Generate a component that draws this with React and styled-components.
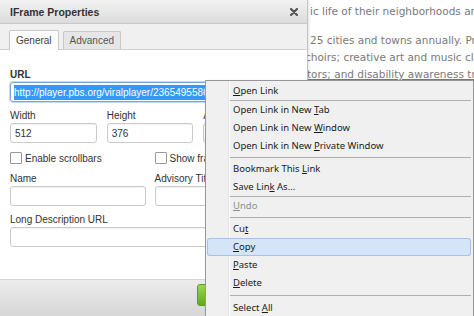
import styled, { createGlobalStyle } from "styled-components";

const GlobalStyle = createGlobalStyle`
  html, body {
    margin: 0;
    padding: 0;
    background: #fff;
    overflow: hidden;
  }
`;

const Screen = styled.div`
  position: relative;
  width: 474px;
  height: 316px;
  overflow: hidden;
  background: #fff;
`;

/* page behind the dialog */
const Article = styled.div`
  padding: 3px 0 0 310px;
  font-family: "DejaVu Sans", sans-serif;
  font-size: 10.5px;
  line-height: 17px;
  color: #7a7a7a;
  white-space: nowrap;
`;

const Para = styled.div`
  margin-bottom: 12px;
`;

const Line = styled.div`
  margin-left: ${(p) => p.$shift || 0}px;
  text-decoration: ${(p) => (p.$link ? "underline" : "none")};
`;

/* dialog */
const Dialog = styled.div`
  position: absolute;
  left: 0;
  top: 0;
  width: 307px;
  height: 316px;
  display: flex;
  flex-direction: column;
  background: #fff;
  border-right: 1px solid #c4c4c4;
  box-shadow: 1px 0 3px rgba(0, 0, 0, 0.12);
  font-family: "Liberation Sans", Arial, sans-serif;
  font-size: 10px;
  color: #333;
`;

const TitleBar = styled.div`
  height: 23px;
  flex: none;
  display: flex;
  align-items: center;
  justify-content: space-between;
  padding: 0 9px 0 10px;
  border-bottom: 1px solid #c8c8c8;
  background: linear-gradient(#f2f2f2, #dcdcdc);
`;

const Title = styled.div`
  font-size: 10.5px;
  font-weight: bold;
  color: #333;
`;

const TabStrip = styled.div`
  height: 25px;
  flex: none;
  display: flex;
  align-items: flex-end;
  gap: 4px;
  padding-left: 9px;
  border-bottom: 1px solid #cfcfcf;
  background: #f0f0f0;
`;

const Tab = styled.div`
  box-sizing: border-box;
  height: ${(p) => (p.$active ? 20 : 18)}px;
  margin-bottom: ${(p) => (p.$active ? -1 : 0)}px;
  padding: 0 6px;
  display: flex;
  align-items: center;
  border: 1px solid #c8c8c8;
  border-bottom: none;
  border-radius: 2px 2px 0 0;
  background: ${(p) => (p.$active ? "#fcfcfc" : "#e6e6e6")};
  color: ${(p) => (p.$active ? "#444" : "#555")};
`;

const Body = styled.div`
  flex: 1;
  display: flex;
  flex-direction: column;
  gap: 8px;
  padding: 19px 17px 0 10px;
`;

const Row = styled.div`
  display: grid;
  grid-template-columns: repeat(${(p) => p.$cols || 1}, 1fr);
  column-gap: ${(p) => (p.$cols === 3 ? 10 : 9)}px;
`;

const Field = styled.div`
  display: flex;
  flex-direction: column;
  min-width: 0;
`;

const Label = styled.label`
  line-height: 12px;
  margin-bottom: 1px;
  font-weight: ${(p) => (p.$bold ? "bold" : "normal")};
  white-space: nowrap;
`;

const TextInput = styled.input`
  box-sizing: border-box;
  width: 100%;
  height: 20px;
  margin: 0;
  padding: 0 4px;
  border: 1px solid #cacaca;
  border-radius: 3px;
  box-shadow: inset 0 1px 1px rgba(0, 0, 0, 0.06);
  background: #fff;
  font: inherit;
  color: #333;
  outline: none;
`;

const FocusBox = styled.div`
  box-sizing: border-box;
  height: 20px;
  padding: 0 3px;
  display: flex;
  align-items: center;
  border: 1px solid #7aa7da;
  border-radius: 3px;
  box-shadow: 0 0 0 1px rgba(122, 167, 218, 0.45);
  white-space: nowrap;
  overflow: hidden;
`;

const Selected = styled.span`
  background: #3399ff;
  color: #fff;
  line-height: 15px;
`;

const SelectBox = styled.div`
  box-sizing: border-box;
  height: 20px;
  padding: 0 4px;
  display: flex;
  align-items: center;
  border: 1px solid #cacaca;
  border-radius: 3px;
  background: linear-gradient(#fff, #f1f1f1);
`;

const CheckRow = styled.label`
  height: 14px;
  display: flex;
  align-items: center;
  gap: 3px;
  white-space: nowrap;
`;

const Check = styled.input.attrs({ type: "checkbox" })`
  appearance: none;
  box-sizing: border-box;
  width: 12px;
  height: 12px;
  margin: 0;
  border: 1px solid #9a9a9a;
  border-radius: 1px;
  background: #fff;
`;

const Footer = styled.div`
  height: 32px;
  flex: none;
  display: flex;
  justify-content: flex-end;
  align-items: flex-start;
  gap: 6px;
  padding: 4px 10px 0 0;
  border-top: 1px solid #d4d4d4;
  background: linear-gradient(#ececec, #d6d6d6);
`;

const Button = styled.button`
  height: 22px;
  width: ${(p) => p.$w}px;
  border-radius: 3px;
  font: inherit;
  font-weight: bold;
  border: 1px solid ${(p) => (p.$primary ? "#5a9e1e" : "#b6b6b6")};
  background: ${(p) =>
    p.$primary
      ? "linear-gradient(#9bd84c, #62aa20)"
      : "linear-gradient(#fff, #e4e4e4)"};
  color: ${(p) => (p.$primary ? "#fff" : "#333")};
`;

/* context menu */
const Menu = styled.ul`
  position: absolute;
  left: 205px;
  top: 80px;
  width: 267px;
  margin: 0;
  padding: 1px 0 6px;
  list-style: none;
  border: 1px solid #979797;
  background: linear-gradient(
    to right,
    #f0f0f0 22px,
    #e2e3e3 22px,
    #e2e3e3 23px,
    #fff 23px,
    #fff 24px,
    #f0f0f0 24px
  );
  box-shadow: 2px 2px 3px rgba(0, 0, 0, 0.25);
  font-family: "Noto Sans", sans-serif;
  font-size: 9.5px;
  color: #1a1a1a;
`;

const Item = styled.li`
  box-sizing: border-box;
  height: 18px;
  line-height: 18px;
  margin: 0 2px 0 1px;
  padding-left: 26px;
  border-radius: 3px;
  white-space: nowrap;
  color: ${(p) => (p.$disabled ? "#8e8e8e" : "inherit")};
  background: ${(p) => (p.$active ? "#d4e5f8" : "transparent")};
  box-shadow: ${(p) => (p.$active ? "inset 0 0 0 1px #a3c3e9" : "none")};
`;

const Sep = styled.li`
  height: 1px;
  margin: ${(p) => p.$space || 0}px 2px ${(p) => p.$space || 0}px 24px;
  background: #aeaeae;
`;

const CloseIcon = () => (
  <svg width="8" height="8" viewBox="0 0 8 8">
    <path
      d="M1 1 L7 7 M7 1 L1 7"
      stroke="#555"
      strokeWidth="2.2"
      strokeLinecap="round"
    />
  </svg>
);

const MENU = [
  ["item", "", "O", "pen Link"],
  ["sep", 0],
  ["item", "Open Link in New ", "T", "ab"],
  ["item", "Open Link in New ", "W", "indow"],
  ["item", "Open Link in New ", "P", "rivate Window"],
  ["sep", 2],
  ["item", "Bookmark This ", "L", "ink"],
  ["item", "Save Lin", "k", " As…"],
  ["sep", 0],
  ["item", "", "U", "ndo", "disabled"],
  ["sep", 2],
  ["item", "Cu", "t", ""],
  ["item", "", "C", "opy", "active"],
  ["item", "", "P", "aste"],
  ["item", "", "D", "elete"],
  ["sep", 3],
  ["item", "Select ", "A", "ll"],
];

export default function App() {
  return (
    <Screen>
      <GlobalStyle />
      <Article>
        <Para>
          <Line>ic life of their neighborhoods and communities.</Line>
        </Para>
        <Para>
          <Line>25 cities and towns annually. Programs include</Line>
          <Line $shift={-5}>choirs; creative art and music classes;</Line>
          <Line $shift={-3} $link>
            tors; and disability awareness training.
          </Line>
        </Para>
      </Article>

      <Dialog>
        <TitleBar>
          <Title>IFrame Properties</Title>
          <CloseIcon />
        </TitleBar>
        <TabStrip>
          <Tab $active>General</Tab>
          <Tab>Advanced</Tab>
        </TabStrip>
        <Body>
          <Field>
            <Label $bold>URL</Label>
            <FocusBox>
              <Selected>http://player.pbs.org/viralplayer/2365495586</Selected>
            </FocusBox>
          </Field>
          <Row $cols={3}>
            <Field>
              <Label>Width</Label>
              <TextInput defaultValue="512" />
            </Field>
            <Field>
              <Label>Height</Label>
              <TextInput defaultValue="376" />
            </Field>
            <Field>
              <Label>Alignment</Label>
              <SelectBox>&lt;not set&gt;</SelectBox>
            </Field>
          </Row>
          <Row $cols={2}>
            <CheckRow>
              <Check />
              Enable scrollbars
            </CheckRow>
            <CheckRow>
              <Check />
              Show frame border
            </CheckRow>
          </Row>
          <Row $cols={2}>
            <Field>
              <Label>Name</Label>
              <TextInput />
            </Field>
            <Field>
              <Label>Advisory Title</Label>
              <TextInput />
            </Field>
          </Row>
          <Field>
            <Label>Long Description URL</Label>
            <TextInput />
          </Field>
        </Body>
        <Footer>
          <Button $primary $w={50}>
            OK
          </Button>
          <Button $w={44}>Cancel</Button>
        </Footer>
      </Dialog>

      <Menu>
        {MENU.map((m, i) =>
          m[0] === "sep" ? (
            <Sep key={i} $space={m[1]} />
          ) : (
            <Item
              key={i}
              $disabled={m[4] === "disabled"}
              $active={m[4] === "active"}
            >
              {m[1]}
              <u>{m[2]}</u>
              {m[3]}
            </Item>
          )
        )}
      </Menu>
    </Screen>
  );
}
